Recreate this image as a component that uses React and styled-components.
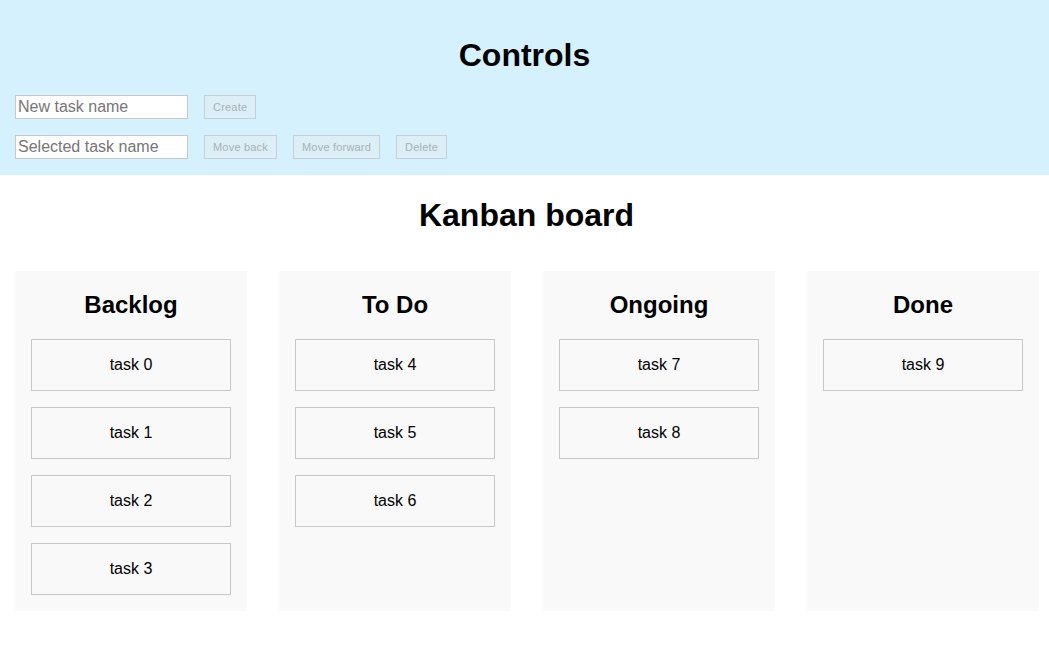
import React from 'react'
import styled, { createGlobalStyle } from 'styled-components'

const GlobalStyle = createGlobalStyle`
  body {
    margin: 0;
    font-family: "Liberation Sans", Arial, sans-serif;
    background: #fff;
  }
`

const ControlsPanel = styled.section`
  background: #d6f1fe;
  padding: 37px 15px 16px;
  display: flex;
  flex-direction: column;
  gap: 16px;
`
const Heading = styled.h1`
  margin: 0 0 ${p => p.$after || 0}px;
  font-size: 32px;
  line-height: 37px;
  text-align: center;
  font-weight: bold;
  color: #000;
`
const Row = styled.div`
  display: flex;
  align-items: center;
  gap: 16px;
`
const TextInput = styled.input`
  box-sizing: border-box;
  width: 173px;
  height: 24px;
  padding: 0 2px;
  border: 1px solid #c8c8c8;
  background: #fff;
  font-family: "Liberation Sans", Arial, sans-serif;
  font-size: 16px;
  color: #000;
  outline: none;
  &::placeholder {
    color: #767676;
  }
`
const Button = styled.button`
  box-sizing: border-box;
  height: 24px;
  padding: 0 8px;
  border: 1px solid #c4d0d6;
  background: #dceff7;
  color: #a8b0b4;
  font-family: "Liberation Sans", Arial, sans-serif;
  font-size: 11px;
  letter-spacing: 0.2px;
`
const Board = styled.main`
  padding: 22px 11px 0 15px;
  display: flex;
  flex-direction: column;
  gap: 37px;
`
const Columns = styled.div`
  display: grid;
  grid-template-columns: repeat(4, 232px);
  gap: 32px;
`
const Column = styled.div`
  background: #f9f9f9;
  padding: 20px 16px 16px;
  display: flex;
  flex-direction: column;
  gap: 16px;
`
const ColumnTitle = styled.h2`
  margin: 0 0 4px;
  font-size: 24px;
  line-height: 28px;
  text-align: center;
  font-weight: bold;
`
const Card = styled.div`
  box-sizing: border-box;
  height: 52px;
  border: 1px solid #c8c8c8;
  display: flex;
  align-items: center;
  justify-content: center;
  font-size: 16px;
  color: #000;
`

const columns = [
  { name: 'Backlog', tasks: ['task 0', 'task 1', 'task 2', 'task 3'] },
  { name: 'To Do', tasks: ['task 4', 'task 5', 'task 6'] },
  { name: 'Ongoing', tasks: ['task 7', 'task 8'] },
  { name: 'Done', tasks: ['task 9'] },
]

const App = () => {
  return (
    <>
      <GlobalStyle />
      <ControlsPanel>
        <Heading $after={5}>Controls</Heading>
        <Row>
          <TextInput placeholder="New task name" />
          <Button disabled>Create</Button>
        </Row>
        <Row>
          <TextInput placeholder="Selected task name" />
          <Button disabled>Move back</Button>
          <Button disabled>Move forward</Button>
          <Button disabled>Delete</Button>
        </Row>
      </ControlsPanel>
      <Board>
        <Heading>Kanban board</Heading>
        <Columns>
          {columns.map(col => (
            <Column key={col.name}>
              <ColumnTitle>{col.name}</ColumnTitle>
              {col.tasks.map(t => <Card key={t}>{t}</Card>)}
            </Column>
          ))}
        </Columns>
      </Board>
    </>
  )
}

export default App
